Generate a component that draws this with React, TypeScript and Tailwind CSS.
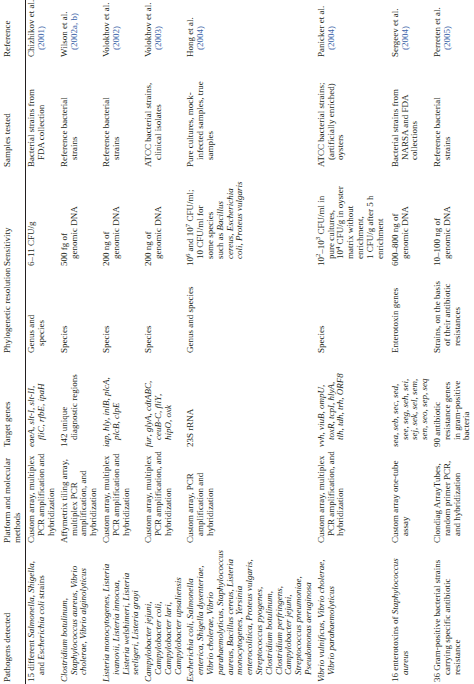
import React from "react";

type Line = React.ReactNode;

const I = ({ children }: { children: React.ReactNode }) => <i>{children}</i>;
const Yr = ({ children }: { children: React.ReactNode }) => (
  <span className="text-[#3a63a8]">{children}</span>
);

function Cell({ lines, first, tall }: { lines: Line[]; first?: boolean; tall?: boolean }) {
  return (
    <td className={`align-top pt-[1.5px] ${tall ? "pb-[4px]" : "pb-[1.5px]"} ${first ? "pl-[2px]" : ""}`}>
      <div className="whitespace-nowrap pl-[7px] [text-indent:-7px]">
        {lines.map((l, i) => (
          <React.Fragment key={i}>
            {i > 0 && <br />}
            {l}
          </React.Fragment>
        ))}
      </div>
    </td>
  );
}

const headers: Line[][] = [
  ["Pathogens detected"],
  ["Platform and molecular", "methods"],
  ["Target genes"],
  ["Phylogenetic resolution"],
  ["Sensitivity"],
  ["Samples tested"],
  ["Reference"],
];

const rows: Line[][][] = [
  [
    [<>15 different <I>Salmonella</I>, <I>Shigella</I>,</>, <>and <I>Escherichia coli</I> strains</>],
    ["Custom array, multiplex", "PCR amplification and", "hybridization"],
    [<><I>eaeA</I>, <I>slt-I</I>, <I>slt-II</I>,</>, <><I>fliC</I>, <I>rfbE</I>, <I>ipaH</I></>],
    ["Genus and", "species"],
    ["6–11 CFU/g"],
    ["Bacterial strains from", "FDA collection"],
    ["Chizhikov et al.", <Yr>(2001)</Yr>],
  ],
  [
    [<><I>Clostridium botulinum</I>,</>, <><I>Staphylococcus aureus</I>, <I>Vibrio</I></>, <><I>cholerae</I>, <I>Vibrio alginolyticus</I></>],
    ["Affymetrix tiling array,", "multiplex PCR", "amplification, and", "hybridization"],
    ["142 unique", "diagnostic regions"],
    ["Species"],
    ["500 fg of", "genomic DNA"],
    ["Reference bacterial", "strains"],
    ["Wilson et al.", <Yr>(2002a, b)</Yr>],
  ],
  [
    [<><I>Listeria monocytogenes</I>, <I>Listeria</I></>, <><I>ivanovii</I>, <I>Listeria innocua</I>,</>, <><I>Listeria welshimeri</I>, <I>Listeria</I></>, <><I>seeligeri</I>, <I>Listeria grayi</I></>],
    ["Custom array, multiplex", "PCR amplification and", "hybridization"],
    [<><I>iap</I>, <I>hly</I>, <I>inlB</I>, <I>plcA</I>,</>, <><I>plcB</I>, <I>clpE</I></>],
    ["Species"],
    ["200 ng of", "genomic DNA"],
    ["Reference bacterial", "strains"],
    ["Volokhov et al.", <Yr>(2002)</Yr>],
  ],
  [
    [<><I>Campylobacter jejuni</I>,</>, <><I>Campylobacter coli</I>,</>, <><I>Campylobacter lari</I>,</>, <I>Campylobacter upsaliensis</I>],
    ["Custom array, multiplex", "PCR amplification, and", "hybridization"],
    [<><I>fur</I>, <I>glyA</I>, <I>cdtABC</I>,</>, <><I>ceuB-C</I>, <I>fliY</I>,</>, <><I>hipO</I>, <I>oxk</I></>],
    ["Species"],
    ["200 ng of", "genomic DNA"],
    ["ATCC bacterial strains,", "clinical isolates"],
    ["Volokhov et al.", <Yr>(2003)</Yr>],
  ],
  [
    [
      <><I>Escherichia coli</I>, <I>Salmonella</I></>,
      <><I>enterica</I>, <I>Shigella dysenteriae</I>,</>,
      <><I>Vibrio cholerae</I>, <I>Vibrio</I></>,
      <><I>parahaemolyticus</I>, <I>Staphylococcus</I></>,
      <><I>aureus</I>, <I>Bacillus cereus</I>, <I>Listeria</I></>,
      <><I>monocytogenes</I>, <I>Yersinia</I></>,
      <><I>enterocolitica</I>, <I>Proteus vulgaris</I>,</>,
      <><I>Streptococcus pyogenes</I>,</>,
      <><I>Clostridium botulinum</I>,</>,
      <><I>Clostridium perfringens</I>,</>,
      <><I>Campylobacter jejuni</I>,</>,
      <><I>Streptococcus pneumoniae</I>,</>,
      <I>Pseudomonas aeruginosa</I>,
    ],
    ["Custom array, PCR", "amplification and", "hybridization"],
    ["23S rRNA"],
    ["Genus and species"],
    [
      <>10<sup>6</sup> and 10<sup>7</sup> CFU/ml;</>,
      "10 CFU/ml for",
      "some species",
      <>such as <I>Bacillus</I></>,
      <><I>cereus</I>, <I>Escherichia</I></>,
      <><I>coli</I>, <I>Proteus vulgaris</I></>,
    ],
    ["Pure cultures, mock-", "infected samples, true", "samples"],
    ["Hong et al.", <Yr>(2004)</Yr>],
  ],
  [
    [<><I>Vibrio vulnificus</I>, <I>Vibrio cholerae</I>,</>, <I>Vibrio parahaemolyticus</I>],
    ["Custom array, multiplex", "PCR amplification, and", "hybridization"],
    [<><I>vvh</I>, <I>viuB</I>, <I>ompU</I>,</>, <><I>toxR</I>, <I>tcpI</I>, <I>hlyA</I>,</>, <><I>tlh</I>, <I>tdh</I>, <I>trh</I>, <I>ORF8</I></>],
    ["Species"],
    [
      <>10<sup>2</sup>–10<sup>3</sup> CFU/ml in</>,
      "pure cultures,",
      <>10<sup>4</sup> CFU/g in oyster</>,
      "matrix without",
      "enrichment,",
      "1 CFU/g after 5 h",
      "enrichment",
    ],
    ["ATCC bacterial strains;", "(artificially enriched)", "oysters"],
    ["Panicker et al.", <Yr>(2004)</Yr>],
  ],
  [
    [<>16 enterotoxins of <I>Staphylococcus</I></>, <I>aureus</I>],
    ["Custom array one-tube", "assay"],
    [
      <><I>sea</I>, <I>seb</I>, <I>sec</I>, <I>sed</I>,</>,
      <><I>see</I>, <I>seg</I>, <I>seh</I>, <I>sei</I>,</>,
      <><I>sej</I>, <I>sek</I>, <I>sel</I>, <I>sem</I>,</>,
      <><I>sen</I>, <I>seo</I>, <I>sep</I>, <I>seq</I></>,
    ],
    ["Enterotoxin genes"],
    ["600–800 ng of", "genomic DNA"],
    ["Bacterial strains from", "NARSA and FDA", "collections"],
    ["Sergeev et al.", <Yr>(2004)</Yr>],
  ],
  [
    ["36 Gram-positive bacterial strains", "carrying specific antibiotic", "resistance"],
    ["Clondiag ArrayTubes,", "random primer PCR,", "and hybridization"],
    ["90 antibiotic", "resistance genes", "in gram-positive", "bacteria"],
    ["Strains, on the basis", "of their antibiotic", "resistances"],
    ["10–100 ng of", "genomic DNA"],
    ["Reference bacterial", "strains"],
    ["Perreten et al.", <Yr>(2005)</Yr>],
  ],
];

// column starts (unrotated): 2, 141, 237, 331, 418, 517, 627
const colW = ["w-[141px]", "w-[96px]", "w-[94px]", "w-[87px]", "w-[99px]", "w-[110px]", "w-[57px]"];

export default function App() {
  return (
    <div className="h-[684px] w-[474px] overflow-hidden bg-white">
      <div className="h-[474px] w-[684px] origin-top-left [transform:translateY(684px)_rotate(-90deg)] font-['Liberation_Serif',serif] text-[9px] leading-[9.8px] text-[#231f20]">
        <table className="w-[684px] table-fixed border-collapse">
          <colgroup>
            {colW.map((w, i) => (
              <col key={i} className={w} />
            ))}
          </colgroup>
          <thead>
            <tr className="border-b-[1.5px] border-[#231f20]">
              {headers.map((h, i) => (
                <th
                  key={i}
                  className={`pt-[3px] pb-[2.4px] text-left align-top font-normal whitespace-nowrap ${i === 0 ? "pl-[2px]" : ""}`}
                >
                  {h.map((l, j) => (
                    <React.Fragment key={j}>
                      {j > 0 && <br />}
                      {l}
                    </React.Fragment>
                  ))}
                </th>
              ))}
            </tr>
          </thead>
          <tbody>
            {rows.map((r, ri) => (
              <tr key={ri}>
                {r.map((c, ci) => (
                  <Cell key={ci} lines={c} first={ci === 0} tall={ri === 5} />
                ))}
              </tr>
            ))}
          </tbody>
        </table>
      </div>
    </div>
  );
}
